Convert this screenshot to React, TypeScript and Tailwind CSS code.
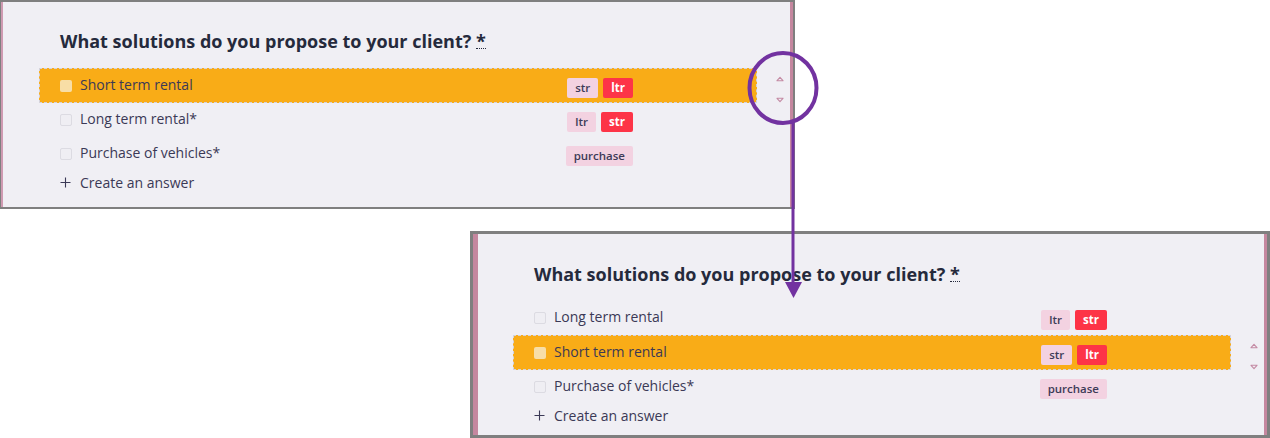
import React from "react";

type Tag = { label: string; tone: "soft" | "hot" };
type Answer = { label: string; tags: Tag[]; active?: boolean };

const FIRST: Answer[] = [
  { label: "Short term rental", active: true, tags: [{ label: "str", tone: "soft" }, { label: "ltr", tone: "hot" }] },
  { label: "Long term rental*", tags: [{ label: "ltr", tone: "soft" }, { label: "str", tone: "hot" }] },
  { label: "Purchase of vehicles*", tags: [{ label: "purchase", tone: "soft" }] },
];

const SECOND: Answer[] = [
  { label: "Long term rental", tags: [{ label: "ltr", tone: "soft" }, { label: "str", tone: "hot" }] },
  { label: "Short term rental", active: true, tags: [{ label: "str", tone: "soft" }, { label: "ltr", tone: "hot" }] },
  { label: "Purchase of vehicles*", tags: [{ label: "purchase", tone: "soft" }] },
];

function MoveArrows() {
  return (
    <div className="ml-[18px] flex flex-col items-center gap-[15px] pt-[8px]">
      <svg width="10" height="7" viewBox="0 0 10 7">
        <path d="M1.5 5.5 L5 1.5 L8.5 5.5 Z" fill="none" stroke="#c48ba4" strokeWidth="1.3" strokeLinejoin="round" />
      </svg>
      <svg width="10" height="7" viewBox="0 0 10 7">
        <path d="M1.5 1.5 L5 5.5 L8.5 1.5 Z" fill="none" stroke="#c48ba4" strokeWidth="1.3" strokeLinejoin="round" />
      </svg>
    </div>
  );
}

function AnswerRow({ answer }: { answer: Answer }) {
  return (
    <div className={answer.active ? "flex h-[35px]" : "flex"}>
      <div
        className={
          answer.active
            ? "flex h-[35px] w-[718px] shrink-0 items-center border border-dashed border-[#d4d3dc] bg-[#f9ac17] pl-[20px] pr-[123px]"
            : "flex h-[34px] w-[718px] shrink-0 items-center border border-transparent pl-[20px] pr-[123px]"
        }
      >
        <span
          className={
            answer.active
              ? "h-[12px] w-[12px] rounded-[2px] bg-[#f8dea6]"
              : "h-[12px] w-[12px] rounded-[2px] border border-[#dcdbe2] bg-[#efeef3]"
          }
        />
        <span className="ml-[8px] mb-[3px] text-[14px] text-[#3b3956]">{answer.label}</span>
        <div className="ml-auto mt-[4px] flex gap-[5px]">
          {answer.tags.map((t) => (
            <span
              key={t.label}
              className={
                t.tone === "hot"
                  ? "flex h-[20px] items-center rounded-[2px] bg-[#fd3447] px-[8px] text-[11.5px] font-bold text-white"
                  : "flex h-[20px] items-center rounded-[2px] bg-[#f3d2e1] px-[8px] text-[11.5px] font-semibold text-[#3d3b57]"
              }
            >
              {t.label}
            </span>
          ))}
        </div>
      </div>
      {answer.active && <MoveArrows />}
    </div>
  );
}

function QuestionPanel({ answers, className }: { answers: Answer[]; className: string }) {
  return (
    <div className={className}>
      <div className="h-full border-r-[3px] border-[#c5879f] bg-[#f0eff4] pt-[27px] pl-[36px]">
        <h2 className="pl-[21px] text-[18px] leading-[24px] font-bold text-[#252a3c]">
          What solutions do you propose to your client?{" "}
          <abbr className="no-underline">
            <span className="inline-block border-b border-dotted border-[#252a3c] leading-[14px]">*</span>
          </abbr>
        </h2>
        <div className="mt-[15px] flex flex-col">
          {answers.map((a) => (
            <AnswerRow key={a.label} answer={a} />
          ))}
        </div>
        <button className="mt-[1px] flex items-center pl-[21px] text-[14px] text-[#3b3956]">
          <svg width="11" height="11" viewBox="0 0 11 11" className="mr-[9px]">
            <path d="M5.5 0.5 V10.5 M0.5 5.5 H10.5" stroke="#3b3956" strokeWidth="1.1" />
          </svg>
          Create an answer
        </button>
      </div>
    </div>
  );
}

export default function App() {
  return (
    <div className="relative h-[438px] w-[1270px] overflow-hidden bg-white font-['Open_Sans',sans-serif]">
      <QuestionPanel
        answers={FIRST}
        className="h-[209px] w-[795px] border-2 border-l border-[#7f7f7f] [&>div]:border-l-[2px] [&>div]:border-l-[#cf9ab1]"
      />
      <QuestionPanel
        answers={SECOND}
        className="ml-[470px] mt-[22px] h-[207px] w-[800px] border-[3px] border-[#7f7f7f] [&>div]:border-l-[5px] [&>div]:border-l-[#c5879f] [&>div]:pl-[35px] [&>div]:pt-[28px]"
      />

      {/* annotation: circle + arrow */}
      <svg className="pointer-events-none absolute inset-0" width="1270" height="438">
        <ellipse cx="783" cy="88" rx="33.5" ry="35" fill="none" stroke="#7232a0" strokeWidth="4" />
        <line x1="793" y1="122" x2="793" y2="284" stroke="#7232a0" strokeWidth="3" />
        <path d="M785 282 L802 282 L793.5 298 Z" fill="#7232a0" />
      </svg>
    </div>
  );
}
